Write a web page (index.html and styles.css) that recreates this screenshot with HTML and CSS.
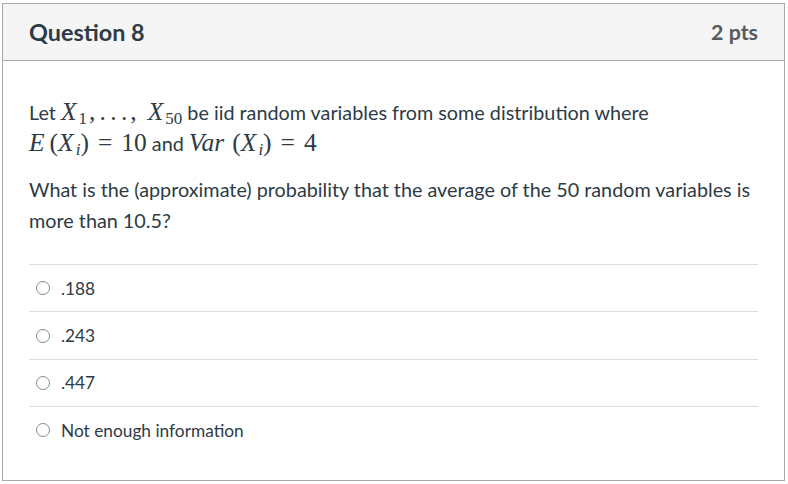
FILE: index.html
```html
<!DOCTYPE html>
<html>
<head>
<meta charset="utf-8">
<link rel="stylesheet" href="styles.css">
</head>
<body>
<div class="question">
  <div class="q-header">
    <span class="q-title">Question 8</span>
    <span class="q-pts">2 pts</span>
  </div>
  <div class="q-body">
    <p class="q-line">Let <span class="m"><i class="x">X</i><sub>1</sub><span class="comma">,</span><span class="dots">. . .</span><span class="comma">,</span><i class="x gap">X</i><sub>50</sub></span> be iid random variables from some distribution where<br><span class="m"><i>E</i><span class="lp">(</span><i class="x">X</i><sub><i>i</i></sub><span>)</span><span class="eq">=</span>10</span> and <span class="m"><i>V</i><i>ar</i><span class="lp lp-wide">(</span><i class="x">X</i><sub><i>i</i></sub><span>)</span><span class="eq">=</span>4</span></p>
    <p class="q-text">What is the (approximate) probability that the average of the 50 random variables is more than 10.5?</p>
    <div class="answers">
      <div class="answer"><span class="radio"></span><span class="a-text">.188</span></div>
      <div class="answer"><span class="radio"></span><span class="a-text">.243</span></div>
      <div class="answer"><span class="radio"></span><span class="a-text">.447</span></div>
      <div class="answer"><span class="radio"></span><span class="a-text">Not enough information</span></div>
    </div>
  </div>
</div>
</body>
</html>
```
FILE: styles.css
```css
html, body { margin: 0; padding: 0; background: #fff; }
body { font-family: Lato, "Liberation Sans", sans-serif; color: #2d3b45; }
.question {
  margin: 3px 0 0 2px;
  width: 781px;
  height: 476px;
  border: 1px solid #aaaaaa;
  box-sizing: content-box;
}
.q-header {
  height: 56px;
  background: #f5f5f5;
  border-bottom: 1px solid #aaaaaa;
  display: flex;
  align-items: center;
  justify-content: space-between;
  padding: 0 26px 0 26px;
}
.q-title { font-size: 23.4px; font-weight: 700; color: #2d3b45; }
.q-pts { font-size: 21.4px; font-weight: 700; color: #555a5e; }
.q-body { padding: 36px 26px 0 26px; }
.q-line { margin: 0; font-size: 19.8px; line-height: 31px; }
.m { font-family: "Liberation Serif", "DejaVu Serif", serif; font-size: 25.5px; line-height: 0; color: #2d3b45; }
.m sub { font-size: 17px; vertical-align: -4px; line-height: 0; }
.m .x { margin-right: 2px; }
.m .gap { margin-left: 9px; }
.m .comma { margin: 0 2px 0 2px; }
.m .dots { letter-spacing: -1px; margin: 0 2px; }
.m .lp { margin-left: 5px; }
.m .lp-wide { margin-left: 8px; }
.m .eq { margin: 0 9px; }
.q-text { margin: 15px 0 0 0; font-size: 19.8px; line-height: 31px; }
.answers { margin-top: 28px; }
.answer {
  height: 47.4px;
  border-top: 1px solid #dddddd;
  display: flex;
  align-items: center;
  padding-left: 7px;
  box-sizing: border-box;
}
.radio {
  width: 12px; height: 12px;
  border: 1px solid #8a8a8a;
  border-radius: 50%;
  margin-right: 11px;
  flex: none;
}
.a-text { font-size: 17.3px; color: #2d3b45; }
```
